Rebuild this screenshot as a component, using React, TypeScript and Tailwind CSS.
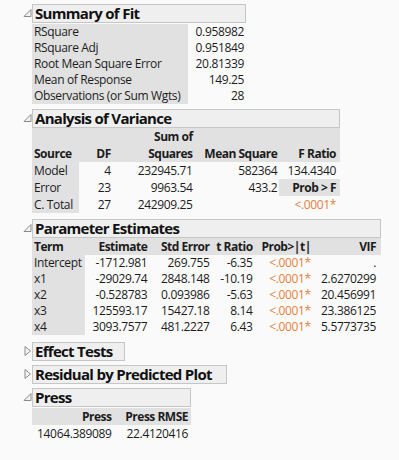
import React from 'react';

const font = { fontFamily: '"Open Sans", "Noto Sans", sans-serif' };

const OpenIcon = () => (
  <svg width="10" height="10" viewBox="0 0 10 10" className="mt-[4px] ml-[3px]">
    <polygon points="9,1.5 9,8.5 2,8.5" fill="#f4f4f4" stroke="#8a8a8a" strokeWidth="1" />
  </svg>
);

const ClosedIcon = () => (
  <svg width="10" height="12" viewBox="0 0 10 12" className="mt-[3px] ml-[3px]">
    <polygon points="3,1.5 8.5,6 3,10.5" fill="#f4f4f4" stroke="#8a8a8a" strokeWidth="1" />
  </svg>
);

const Node = ({
  title, open, width, className, children
}: {
  title: string,
  open?: boolean,
  width: string,
  className?: string,
  children?: React.ReactNode
}) => (
  <div className={`flex items-start ${className ?? ''}`}>
    <div className="w-[13px] shrink-0">{open ? <OpenIcon /> : <ClosedIcon />}</div>
    <div className="flex flex-col">
      <div className={`${width} h-[19px] border border-[#c6c6c6] bg-[#efefef] pl-[2px] text-[15px] font-bold leading-[17px] tracking-[-0.7px] text-[#111] whitespace-nowrap`}>
        {title}
      </div>
      {children}
    </div>
  </div>
);

const P = ({ v }: { v: string }) => <span className="text-[#e0823d]">{v}</span>;

export default function App() {
  const summary = [
    ['RSquare', '0.958982'],
    ['RSquare Adj', '0.951849'],
    ['Root Mean Square Error', '20.81339'],
    ['Mean of Response', '149.25'],
    ['Observations (or Sum Wgts)', '28'],
  ];

  const anova = [
    ['Model', '4', '232945.71', '582364', '134.4340'],
    ['Error', '23', '9963.54', '433.2', ''],
    ['C. Total', '27', '242909.25', '', ''],
  ];

  const params = [
    ['Intercept', '-1712.981', '269.755', '-6.35', '.'],
    ['x1', '-29029.74', '2848.148', '-10.19', '2.6270299'],
    ['x2', '-0.528783', '0.093986', '-5.63', '20.456991'],
    ['x3', '125593.17', '15427.18', '8.14', '23.386125'],
    ['x4', '3093.7577', '481.2227', '6.43', '5.5773735'],
  ];

  return (
    <div className="min-h-screen bg-[#fafafa] pt-[4px] pl-[19px] text-[12px] tracking-[-0.35px] text-[#1c1c1c]" style={font}>
      <Node title="Summary of Fit" open width="w-[214px]" className="mb-[5px]">
        <table className="mt-[1px] border-collapse leading-[16px]">
          <tbody>
            {summary.map(([k, v]) => (
              <tr key={k}>
                <td className="w-[153px] bg-[#e1e1e1] pl-[2px] p-0 whitespace-nowrap">{k}</td>
                <td className="w-[57px] pr-[2px] text-right">{v}</td>
              </tr>
            ))}
          </tbody>
        </table>
      </Node>

      <Node title="Analysis of Variance" open width="w-[308px]" className="mb-[6px]">
        <table className="table-fixed border-collapse">
          <thead className="bg-[#e1e1e1] font-bold leading-[17px] tracking-[-0.5px]">
            <tr>
              <th className="w-[47px]"></th>
              <th className="w-[33px]"></th>
              <th className="w-[81px] pr-[2px] text-right">Sum of</th>
              <th className="w-[84px]"></th>
              <th className="w-[60px]"></th>
            </tr>
            <tr>
              <th className="pl-[2px] text-left">Source</th>
              <th className="pr-[2px] text-right">DF</th>
              <th className="pr-[2px] text-right">Squares</th>
              <th className="pr-[2px] text-right whitespace-nowrap">Mean Square</th>
              <th className="pr-[4px] text-right whitespace-nowrap">F Ratio</th>
            </tr>
          </thead>
          <tbody className="leading-[17px]">
            {anova.map((r, i) => (
              <tr key={r[0]}>
                <td className="bg-[#e1e1e1] pl-[2px] whitespace-nowrap">{r[0]}</td>
                <td className="pr-[2px] text-right">{r[1]}</td>
                <td className="pr-[2px] text-right">{r[2]}</td>
                <td className="pr-[2px] text-right">{r[3]}</td>
                <td className={`pr-[4px] text-right whitespace-nowrap ${i === 1 ? 'bg-[#e1e1e1] font-bold tracking-[-0.5px]' : ''}`}>
                  {i === 0 && r[4]}
                  {i === 1 && 'Prob > F'}
                  {i === 2 && <P v="<.0001*" />}
                </td>
              </tr>
            ))}
          </tbody>
        </table>
      </Node>

      <Node title="Parameter Estimates" open width="w-[349px]" className="mb-[7px]">
        <table className="table-fixed border-collapse">
          <thead className="bg-[#e1e1e1] font-bold leading-[17px] tracking-[-0.5px]">
            <tr>
              <th className="w-[53px] pl-[2px] text-left">Term</th>
              <th className="w-[64px] pr-[2px] text-right">Estimate</th>
              <th className="w-[62px] pr-[2px] text-right whitespace-nowrap">Std Error</th>
              <th className="w-[43px] pr-[2px] text-right whitespace-nowrap">t Ratio</th>
              <th className="w-[58px] pr-[2px] text-right whitespace-nowrap">Prob&gt;|t|</th>
              <th className="w-[68px] pr-[5px] text-right">VIF</th>
            </tr>
          </thead>
          <tbody className="leading-[16px]">
            {params.map((r) => (
              <tr key={r[0]}>
                <td className="bg-[#e1e1e1] pl-[2px]">{r[0]}</td>
                <td className="pr-[2px] text-right">{r[1]}</td>
                <td className="pr-[2px] text-right">{r[2]}</td>
                <td className="pr-[2px] text-right">{r[3]}</td>
                <td className="pr-[2px] text-right"><P v="<.0001*" /></td>
                <td className="pr-[5px] text-right">{r[4]}</td>
              </tr>
            ))}
          </tbody>
        </table>
      </Node>

      <Node title="Effect Tests" width="w-[93px]" className="mb-[4px]" />
      <Node title="Residual by Predicted Plot" width="w-[195px]" className="mb-[4px]" />

      <Node title="Press" open width="w-[159px]">
        <table className="mt-[1px] table-fixed border-collapse">
          <thead className="bg-[#e1e1e1] font-bold leading-[17px] tracking-[-0.5px]">
            <tr>
              <th className="w-[80px] pr-[2px] text-right">Press</th>
              <th className="w-[76px] pr-[3px] text-right whitespace-nowrap">Press RMSE</th>
            </tr>
          </thead>
          <tbody className="leading-[17px]">
            <tr>
              <td className="pr-[2px] text-right">14064.389089</td>
              <td className="pr-[3px] text-right">22.4120416</td>
            </tr>
          </tbody>
        </table>
      </Node>
    </div>
  );
}
